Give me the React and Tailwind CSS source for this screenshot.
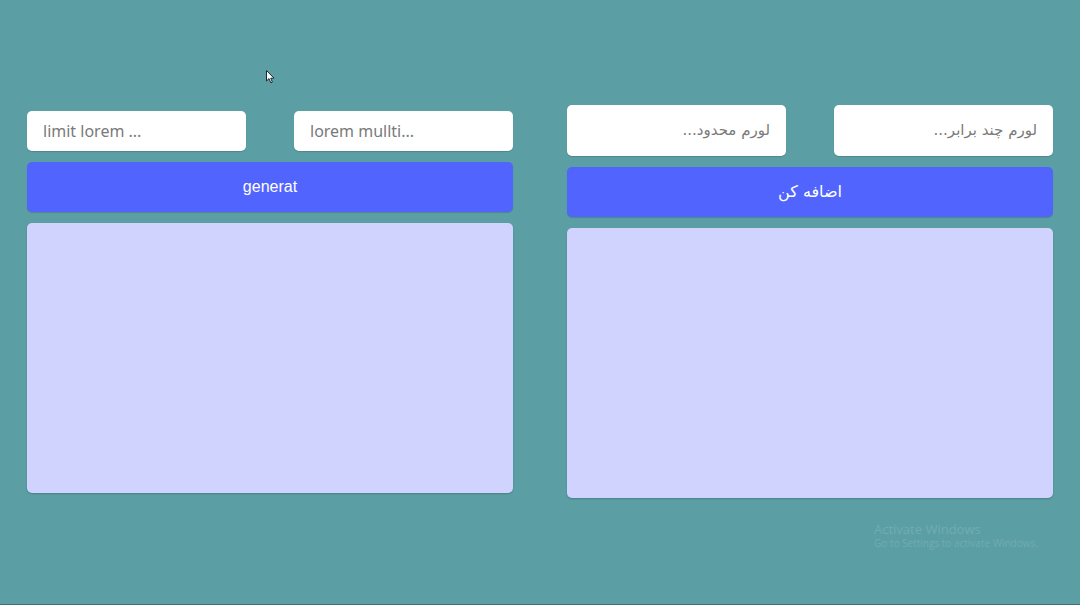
export default function App() {
  const inputBase =
    "bg-white rounded-[5px] text-[16px] text-[#7a7a7a] flex items-center px-4 shadow-[0_1px_1px_rgba(0,0,0,0.15)]";
  return (
    <div className="relative w-[1080px] h-[605px] bg-[#5b9fa5] overflow-hidden border-b border-[#3d6f75]" style={{ fontFamily: '"Noto Sans", "DejaVu Sans", sans-serif' }}>
      <div className="flex gap-[54px] px-[27px] items-start">
        {/* Left column */}
        <div className="w-[486px] mt-[111px] flex flex-col gap-[11px]">
          <div className="flex justify-between">
            <div className={`${inputBase} w-[219px] h-[40px]`}>limit lorem ...</div>
            <div className={`${inputBase} w-[219px] h-[40px]`}>lorem mullti...</div>
          </div>
          <div className="h-[50px] rounded-[5px] bg-[#5164fe] flex items-center justify-center text-white text-[16px] shadow-[0_1px_1px_rgba(0,0,0,0.15)]" style={{ fontFamily: '"Liberation Sans", Arial, sans-serif' }}>
            generat
          </div>
          <div className="h-[270px] rounded-[5px] bg-[#d0d3fe] shadow-[0_1px_2px_rgba(0,0,0,0.2)]"></div>
        </div>
        {/* Right column */}
        <div className="w-[486px] mt-[105px] flex flex-col gap-[11px]" dir="rtl">
          <div className="flex justify-between">
            <div className={`${inputBase} w-[219px] h-[51px]`} style={{ fontFamily: '"DejaVu Sans", sans-serif', fontSize: '15px' }}>لورم چند برابر...</div>
            <div className={`${inputBase} w-[219px] h-[51px]`} style={{ fontFamily: '"DejaVu Sans", sans-serif', fontSize: '15px' }}>لورم محدود...</div>
          </div>
          <div className="h-[50px] rounded-[5px] bg-[#5164fe] flex items-center justify-center text-white text-[16px] shadow-[0_1px_1px_rgba(0,0,0,0.15)]" style={{ fontFamily: '"DejaVu Sans", sans-serif' }}>
            اضافه کن
          </div>
          <div className="h-[270px] rounded-[5px] bg-[#d0d3fe] shadow-[0_1px_2px_rgba(0,0,0,0.2)]"></div>
        </div>
      </div>

      {/* Windows watermark */}
      <div className="absolute left-[874px] top-[521px] text-[#72abb0] leading-tight" style={{ fontFamily: '"Open Sans", "Noto Sans", sans-serif' }}>
        <div className="text-[13px]">Activate Windows</div>
        <div className="text-[10px]">Go to Settings to activate Windows.</div>
      </div>

      {/* Mouse cursor */}
      <svg className="absolute left-[266px] top-[70px]" width="9" height="14" viewBox="0 0 9 14">
        <path d="M0.5 0.5 L0.5 11 L3 8.6 L4.8 12.8 L6.4 12.1 L4.7 8.2 L8 8.2 Z" fill="#ffffff" stroke="#1b2b33" strokeWidth="1" strokeLinejoin="round" />
      </svg>
    </div>
  );
}
